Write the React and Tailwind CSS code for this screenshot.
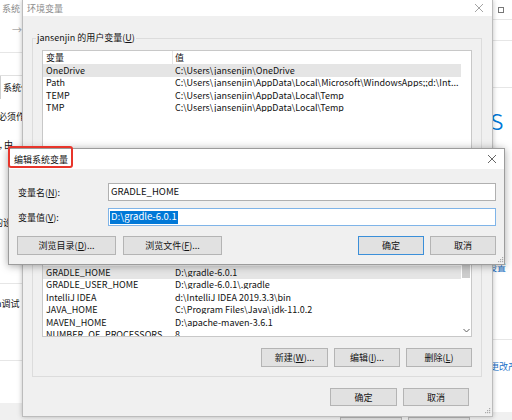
import React from "react";

const U = ({ children }) => <span className="underline underline-offset-1">{children}</span>;

function Btn({ children, className = "", focus = false }) {
  return (
    <div
      className={`flex items-center justify-center bg-[#e1e1e1] border ${
        focus ? "border-[#3b8fd9]" : "border-[#b4b4b4]"
      } text-[#111] ${className}`}
    >
      {children}
    </div>
  );
}

function CloseX({ color = "#666" }) {
  return (
    <svg width="10" height="10" viewBox="0 0 10 10">
      <path d="M1 1L9 9M9 1L1 9" stroke={color} strokeWidth="0.9" />
    </svg>
  );
}

function Grip() {
  return (
    <svg width="7" height="7" viewBox="0 0 7 7">
      <g fill="#a9a9a9">
        <rect x="5" y="0" width="1.2" height="1.2" />
        <rect x="3" y="2" width="1.2" height="1.2" />
        <rect x="5" y="2" width="1.2" height="1.2" />
        <rect x="1" y="4" width="1.2" height="1.2" />
        <rect x="3" y="4" width="1.2" height="1.2" />
        <rect x="5" y="4" width="1.2" height="1.2" />
      </g>
    </svg>
  );
}

function ListView({ rows, selected, height, scroll = false }) {
  return (
    <div className={`flex bg-white border border-[#c8c8c8] overflow-hidden`} style={{ height }}>
      <div className="flex flex-col w-[418px] shrink-0">
        <div className="flex h-[13px] shrink-0 items-center">
          <div className="w-[130px] h-full flex items-center pl-[3px] border-r border-[#e5e5e5]">变量</div>
          <div className="flex-1 h-full flex items-center pl-[2px]">值</div>
        </div>
        {rows.map(([k, v], i) => (
          <div
            key={i}
            className={`flex h-[12.5px] shrink-0 items-center whitespace-nowrap ${
              i === selected ? "bg-[#e5e5e5]" : ""
            }`}
          >
            <div className="w-[130px] pl-[3px] overflow-hidden">{k}</div>
            <div className="flex-1 pl-[2px] overflow-hidden">{v}</div>
          </div>
        ))}
      </div>
      <div className="flex-1 flex flex-col">
        {scroll && (
          <>
            <div className="h-[13px]" />
            <div className="h-[62px] mx-[1px] bg-[#cdcdcd]" />
            <div className="flex-1" />
            <div className="h-[12px] flex items-center justify-center">
              <svg width="7" height="5" viewBox="0 0 7 5">
                <path d="M0.5 1L3.5 4L6.5 1" stroke="#606060" fill="none" strokeWidth="1" />
              </svg>
            </div>
          </>
        )}
      </div>
    </div>
  );
}

function Group({ label, children, className = "" }) {
  return (
    <div className={`relative border border-[#dcdcdc] px-[9px] ${className}`}>
      <div className="absolute -top-[6px] left-[3px] bg-[#f0f0f0] px-[1px] leading-none">{label}</div>
      {children}
    </div>
  );
}

export default function App() {
  const userRows = [
    ["OneDrive", "C:\\Users\\jansenjin\\OneDrive"],
    ["Path", "C:\\Users\\jansenjin\\AppData\\Local\\Microsoft\\WindowsApps;;d:\\Int..."],
    ["TEMP", "C:\\Users\\jansenjin\\AppData\\Local\\Temp"],
    ["TMP", "C:\\Users\\jansenjin\\AppData\\Local\\Temp"],
  ];
  const sysRows = [
    ["ComSpec", "C:\\Windows\\system32\\cmd.exe"],
    ["DriverData", "C:\\Windows\\System32\\Drivers\\DriverData"],
    ["FPS_BROWSER_APP_PROFILE_STRING", "Internet Explorer"],
    ["FPS_BROWSER_USER_PROFILE_STRING", "Default"],
    ["GRADLE_HOME", "D:\\gradle-6.0.1"],
    ["GRADLE_USER_HOME", "D:\\gradle-6.0.1\\.gradle"],
    ["IntelliJ IDEA", "d:\\IntelliJ IDEA 2019.3.3\\bin"],
    ["JAVA_HOME", "C:\\Program Files\\Java\\jdk-11.0.2"],
    ["MAVEN_HOME", "D:\\apache-maven-3.6.1"],
    ["NUMBER_OF_PROCESSORS", "8"],
    ["OS", "Windows_NT"],
  ];

  return (
    <div className="relative w-[512px] h-[420px] overflow-hidden bg-white text-[9px] leading-none text-[#111] font-['Noto_Sans_CJK_SC',sans-serif]">
      {/* Background window: 系统 */}
      <div className="absolute inset-0 flex justify-between bg-white">
        <div className="w-[22px] flex flex-col overflow-hidden whitespace-nowrap">
          <div className="h-[16px] flex items-center pl-[2px] text-[#8a8a8a]">系统</div>
          <div className="h-[36px] flex items-start justify-end pt-[9px] text-[#aaaaaa] text-[10px]">→</div>
          <div className="h-[23px] border-t border-[#e6e6e6]" />
          <div className="h-[24px] border-t border-[#e0e0e0] flex items-center">
            <div className="h-full border-l border-[#d0d0d0] flex items-center pl-[2px]">系统保</div>
          </div>
          <div className="h-[34px] flex items-center -ml-[2px]">必须作</div>
          <div className="h-[16px] flex items-end -ml-[3px]">l, 由</div>
          <div className="h-[67px]" />
          <div className="h-[12px] flex items-center -ml-[6px]">的设</div>
          <div className="h-[55px]" />
          <div className="h-[77px] border-t border-[#e6e6e6] pt-[15px] -ml-[4px]">
            <div>n调试</div>
          </div>
          <div className="h-[43px] border-t border-[#e6e6e6]" />
          <div className="flex-1 bg-[#f0f0f0]" />
        </div>
        <div className="w-[20px] flex flex-col overflow-hidden whitespace-nowrap">
          <div className="h-[19px] flex items-center pl-[6px]">
            <div className="w-[6px] h-[6px] border border-[#777]" />
          </div>
          <div className="h-[21px] border-t border-[#e6e6e6]" />
          <div className="h-[47px] border-t border-[#e6e6e6]" />
          <div className="h-[175px] border-t border-[#e6e6e6] pt-[14px]">
            <div className="text-[30px] font-light text-[#0078d7] -ml-[2px] leading-none">s 1</div>
          </div>
          <div className="h-[77px] pt-[1px] text-[#1c73c9] -ml-[4px]">设置</div>
          <div className="h-[60px] border-t border-[#e6e6e6] pt-[22px] text-[#1c73c9] -ml-[2px]">更改产</div>
          <div className="flex-1" />
        </div>
      </div>
      {/* bottom strip of background window */}
      <div className="absolute left-0 right-0 top-[412px] h-[8px] bg-[#f0f0f0] flex gap-[6px] pl-[340px]">
        <div className="mt-[5px] w-[62px] h-[8px] border border-[#b4b4b4] bg-[#e1e1e1]" />
        <div className="mt-[5px] w-[62px] h-[8px] border border-[#b4b4b4] bg-[#e1e1e1]" />
      </div>

      {/* 环境变量 window */}
      <div className="absolute left-[22px] top-0 w-[471px] h-[417px] flex flex-col bg-[#f0f0f0] border-x border-b border-[#bcbcbc] shadow-[0_0_5px_rgba(0,0,0,0.25)]">
        <div className="h-[16px] shrink-0 bg-white flex items-center justify-between pl-[4px] pr-[8px] text-[#8c8c8c]">
          <span>环境变量</span>
          <CloseX color="#9a9a9a" />
        </div>
        <div className="flex-1 flex flex-col pt-[22px] px-[9px] pr-[10px]">
          <Group label={<>jansenjin 的用户变量(<U>U</U>)</>} className="pt-[11px] pb-[4px]">
            <ListView rows={userRows} selected={0} height={104} />
            <div className="flex justify-end gap-[6px] mt-[6px]">
              <Btn className="w-[67px] h-[19px]">新建(<U>N</U>)...</Btn>
              <Btn className="w-[66px] h-[19px]">编辑(<U>E</U>)...</Btn>
              <Btn className="w-[66px] h-[19px]">删除(<U>D</U>)</Btn>
            </div>
          </Group>
          <Group label={<>系统变量(<U>S</U>)</>} className="mt-[6px] pt-[11px] pb-[9px]">
            <ListView rows={sysRows} selected={4} height={135} scroll />
            <div className="flex justify-end gap-[6px] mt-[11px]">
              <Btn className="w-[67px] h-[19px]">新建(<U>W</U>)...</Btn>
              <Btn className="w-[66px] h-[19px]">编辑(<U>I</U>)...</Btn>
              <Btn className="w-[66px] h-[19px]">删除(<U>L</U>)</Btn>
            </div>
          </Group>
          <div className="flex justify-end gap-[6px] mt-[11px] pr-[13px]">
            <Btn className="w-[67px] h-[18px]">确定</Btn>
            <Btn className="w-[66px] h-[18px]">取消</Btn>
          </div>
        </div>
        <div className="absolute right-[1px] bottom-[1px]">
          <Grip />
        </div>
      </div>

      {/* 编辑系统变量 dialog */}
      <div className="absolute left-[8px] top-[148px] w-[497px] h-[117px] flex flex-col bg-[#f0f0f0] border border-[#9c9c9c] shadow-[0_1px_8px_rgba(0,0,0,0.35)]">
        <div className="h-[20px] shrink-0 bg-white flex items-center justify-between pl-[5px] pr-[7px] text-[#111]">
          <span>编辑系统变量</span>
          <CloseX color="#555" />
        </div>
        <div className="flex-1 flex flex-col px-[8px] pt-[14px]">
          <div className="flex items-center h-[18px]">
            <div className="w-[91px] pl-[1px]">变量名(<U>N</U>):</div>
            <div className="flex-1 h-full bg-white border border-[#b0b0b0] flex items-center pl-[2px] text-[9.5px]">GRADLE_HOME</div>
          </div>
          <div className="flex items-center h-[18px] mt-[7px]">
            <div className="w-[91px] pl-[1px]">变量值(<U>V</U>):</div>
            <div className="flex-1 h-full bg-white border border-[#7fb4e8] flex items-center pl-[1px] text-[9.5px]">
              <span className="bg-[#0078d7] text-white px-[1px] h-[13px] flex items-center">D:\gradle-6.0.1</span>
            </div>
          </div>
          <div className="flex items-center mt-[10px]">
            <Btn className="w-[99px] h-[19px]">浏览目录(<U>D</U>)...</Btn>
            <Btn className="w-[99px] h-[19px] ml-[7px]">浏览文件(<U>F</U>)...</Btn>
            <div className="flex-1" />
            <Btn focus className="w-[66px] h-[19px]">确定</Btn>
            <Btn className="w-[66px] h-[19px] ml-[6px]">取消</Btn>
          </div>
        </div>
        <div className="absolute right-[0px] bottom-[0px]">
          <Grip />
        </div>
      </div>

      {/* red annotation box */}
      <div className="absolute left-[8px] top-[146px] w-[65px] h-[22px] border-2 border-[#e8352b] rounded-[3px]" />
    </div>
  );
}
